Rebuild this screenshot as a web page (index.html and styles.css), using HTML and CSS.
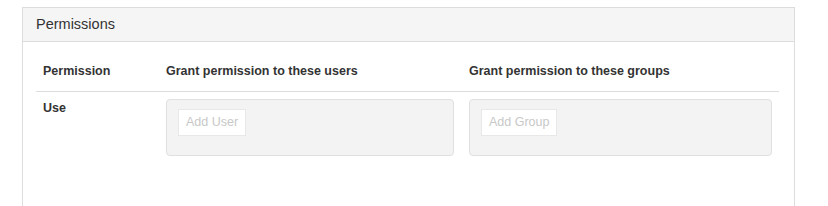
FILE: index.html
```html
<!DOCTYPE html>
<html lang="en">
  <head>
    <meta charset="UTF-8" />
    <title>Permissions</title>
    <link rel="stylesheet" href="styles.css">
  </head>
  <body>
    <div class="panel">
      <div class="panel-heading">Permissions</div>
      <div class="panel-body">
        <div class="perm-table">
          <div class="th col-name">Permission</div>
          <div class="th">Grant permission to these users</div>
          <div class="th">Grant permission to these groups</div>

          <div class="td col-name">Use</div>
          <div class="td">
            <div class="picker">
              <span class="add-btn">Add User</span>
            </div>
          </div>
          <div class="td">
            <div class="picker">
              <span class="add-btn">Add Group</span>
            </div>
          </div>
        </div>
      </div>
    </div>
  </body>
</html>
```

FILE: styles.css
```css
*,
*::after,
*::before {
  padding: 0;
  margin: 0;
  box-sizing: border-box;
}
html {
  font-family: "Liberation Sans", Arial, sans-serif;
  color: #333;
}
body {
  background: #fff;
  padding-top: 7px;
}
.panel {
  margin: 0 33px 0 22px;
  height: calc(100vh - 7px);
  border: 1px solid #ddd;
  border-bottom: none;
}
.panel-heading {
  height: 34px;
  padding: 0 13px;
  line-height: 33px;
  font-size: 14.5px;
  background: #f5f5f5;
  border-bottom: 1px solid #ddd;
}
.panel-body {
  padding: 12px 15px 0 13px;
}

/* bảng quyền */
.perm-table {
  display: grid;
  grid-template-columns: 122px 303px 1fr;
  font-size: 12.5px;
  line-height: 18px;
}
.th {
  padding: 8px 7px 11px 8px;
  font-weight: bold;
  border-bottom: 1px solid #ddd;
}
.td {
  padding: 7px 7px 0 8px;
}
.td.col-name {
  font-weight: bold;
}
.col-name {
  padding-left: 7px;
}

/* ô chọn user / group */
.picker {
  height: 57px;
  padding: 9px 11px;
  background: #f3f3f3;
  border: 1px solid #e0e0e0;
  border-radius: 4px;
}
.add-btn {
  display: inline-block;
  height: 27px;
  padding: 0 7px;
  line-height: 25px;
  font-size: 12.5px;
  color: #c8c8c8;
  background: #fff;
  border: 1px solid #e8e8e8;
}
```
